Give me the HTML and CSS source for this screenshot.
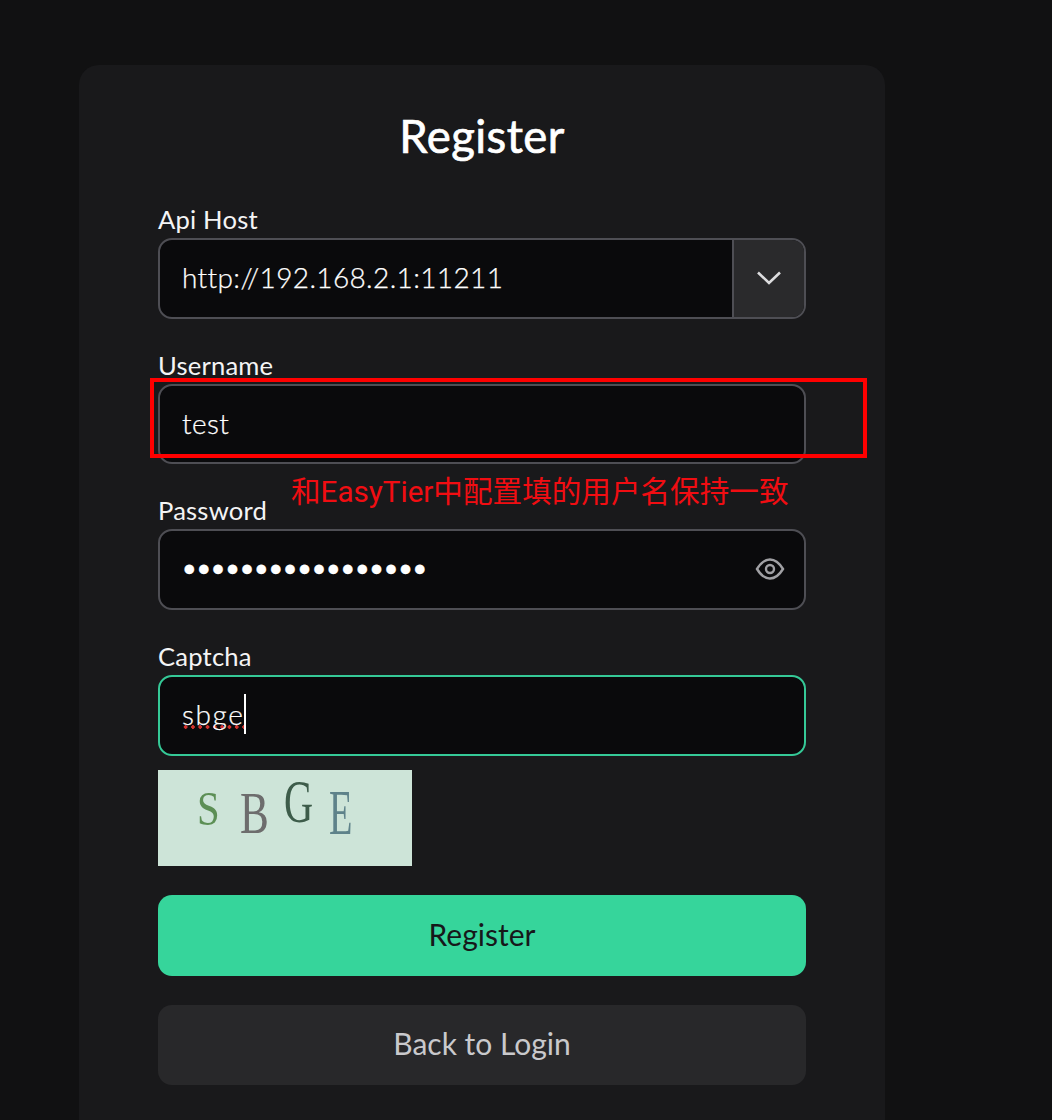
FILE: index.html
```html
<!DOCTYPE html>
<html>
  <head>
    <meta charset="utf-8">
    <meta name="viewport" content="width=device-width">
    <title>Register</title>
    <link rel="stylesheet" href="styles.css">
  </head>
  <body>
    <div class="card">
      <h1>Register</h1>

      <div class="field">
        <label for="api-host">Api Host</label>
        <div class="input-group">
          <input id="api-host" type="text" value="http://192.168.2.1:11211">
          <div class="dropdown-btn">
            <svg width="26" height="16" viewBox="0 0 26 16" fill="none" stroke="#dcdcde" stroke-width="2.6"><path d="M2 2.5 L13 13 L24 2.5"/></svg>
          </div>
        </div>
      </div>

      <div class="field">
        <label for="username">Username</label>
        <div class="input-group">
          <input id="username" type="text" value="test">
        </div>
      </div>

      <div class="field">
        <label for="password">Password</label>
        <div class="input-group">
          <input id="password" type="password" value="aaaaaaaaaaaaaaaaa">
          <svg class="eye" width="30" height="24" viewBox="0 0 30 24" fill="none" stroke="#a0a0a4" stroke-width="2.4"><path d="M2 12 C6 5.5 10 2.5 15 2.5 C20 2.5 24 5.5 28 12 C24 18.5 20 21.5 15 21.5 C10 21.5 6 18.5 2 12 Z"/><circle cx="15" cy="12" r="4"/></svg>
        </div>
      </div>

      <div class="field captcha-field">
        <label for="captcha">Captcha</label>
        <div class="input-group focused">
          <div id="captcha" class="typed"><span class="misspelled">sbge</span><span class="caret"></span></div>
        </div>
      </div>

      <div class="captcha-img">
        <span class="cap-s">S</span>
        <span class="cap-b">B</span>
        <span class="cap-g">G</span>
        <span class="cap-e">E</span>
      </div>

      <button class="btn btn-primary">Register</button>
      <button class="btn btn-secondary">Back to Login</button>
    </div>

    <!-- annotation drawn over the screenshot -->
    <div class="note-box"></div>
    <div class="note-text">和EasyTier中配置填的用户名保持一致</div>
  </body>
</html>
```

FILE: styles.css
```css
html, body {
  margin: 0;
  height: 100%;
}

body {
  position: relative;
  height: 1120px;
  overflow: hidden;
  background-color: #111112;
  color: #fff;
  font-family: "Lato", "Noto Sans", sans-serif;
  padding-top: 65px;
  box-sizing: border-box;
}

.card {
  width: 806px;
  height: 1100px;
  margin-left: 79px;
  padding: 0 79px;
  box-sizing: border-box;
  background-color: #19191b;
  border-radius: 20px;
}

h1 {
  margin: 0;
  padding-top: 44px;
  height: 142px;
  box-sizing: border-box;
  text-align: center;
  font-size: 45.5px;
  line-height: 54px;
  font-weight: 400;
  letter-spacing: 0.4px;
  -webkit-text-stroke: 0.7px #fff;
}

.field {
  margin-bottom: 34.1px;
}

.field label {
  display: block;
  padding-bottom: 7px;
  font-size: 25.6px;
  line-height: 24px;
  letter-spacing: 0.2px;
  color: #f4f4f5;
}

.input-group {
  display: flex;
  align-items: center;
  height: 80.6px;
  box-sizing: border-box;
  background-color: #0a0a0c;
  border: 2px solid #4e4e54;
  border-radius: 14px;
  overflow: hidden;
}

.input-group.focused {
  border-color: #35c997;
}

.input-group input,
.typed {
  flex-grow: 1;
  min-width: 0;
  height: 100%;
  padding: 0 22px 2px;
  box-sizing: border-box;
  background: transparent;
  border: unset;
  outline: none;
  color: #fff;
  font-family: inherit;
  font-size: 28px;
  font-weight: 300;
  letter-spacing: 0.37px;
  -webkit-text-stroke: 0.25px #fff;
}

#password {
  padding-left: 20px;
  padding-bottom: 6px;
  font-size: 32px;
  letter-spacing: -4.15px;
}

.dropdown-btn {
  display: flex;
  align-items: center;
  justify-content: center;
  flex-shrink: 0;
  width: 72px;
  height: 100%;
  background-color: #2a2a2c;
  border-left: 2px solid #4e4e54;
  box-sizing: border-box;
}

.eye {
  flex-shrink: 0;
  margin-right: 19.5px;
  margin-bottom: 1.5px;
}

.typed {
  display: flex;
  align-items: center;
  letter-spacing: 1.6px;
}

.misspelled {
  line-height: 28px;
  padding-bottom: 1px;
  margin-top: 1px;
  background: radial-gradient(circle, #d1322d 1.6px, transparent 2px) 0 100% / 7.3px 4px repeat-x;
}

.caret {
  width: 2px;
  height: 40px;
  background-color: #fff;
}

.captcha-field {
  margin-bottom: 14px;
}

.captcha-img {
  position: relative;
  width: 254px;
  height: 96px;
  background-color: #cde4d8;
  font-family: "Liberation Serif", serif;
}

.captcha-img span {
  position: absolute;
  filter: blur(0.5px);
  line-height: 1;
  transform-origin: 0 0;
}

.cap-s { left: 39px; top: 15px; font-size: 48px; color: #5c8f55; transform: scaleX(0.85); }
.cap-b { left: 82px; top: 13px; font-size: 60px; color: #6d6d6d; transform: scaleX(0.72); }
.cap-g { left: 126px; top: 0; font-size: 62px; line-height: 0.96; color: #3d5c4a; transform: scaleX(0.65); }
.cap-e { left: 171px; top: 11px; font-size: 64px; color: #5e828a; transform: scaleX(0.6); }

.btn {
  display: block;
  width: 100%;
  padding-bottom: 4px;
  border: unset;
  border-radius: 14px;
  font-family: inherit;
  font-size: 30px;
  cursor: pointer;
}

.btn-primary {
  height: 81px;
  margin-top: 29px;
  background-color: #36d59b;
  color: #16181a;
}

.btn-secondary {
  height: 80px;
  margin-top: 29px;
  background-color: #28282a;
  color: #c9c9cc;
}

.note-box {
  position: absolute;
  left: 150px;
  top: 378px;
  width: 717px;
  height: 80px;
  box-sizing: border-box;
  border: 4px solid #ff0000;
}

.note-text {
  position: absolute;
  left: 291px;
  top: 473px;
  font-family: "Roboto", "Noto Sans CJK SC", sans-serif;
  font-size: 29.6px;
  line-height: 38px;
  color: #f10d12;
  white-space: nowrap;
}
```
